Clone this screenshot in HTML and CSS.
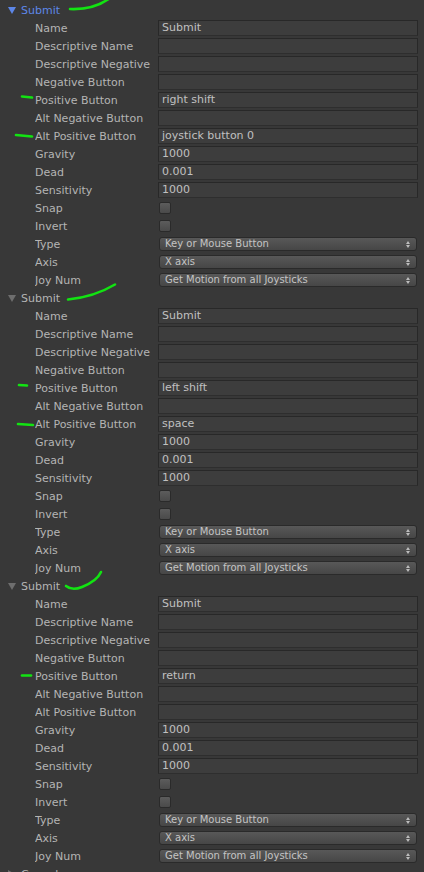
FILE: index.html
```html
<!DOCTYPE html>
<html lang="en">
<head>
    <meta charset="UTF-8">
    <meta name="viewport" content="width=device-width, initial-scale=1.0">
    <title>Input Manager - Axes</title>
    <link rel="stylesheet" href="styles.css">
</head>
<body>
<div class="inspector">
    <!-- axis 1 (selected) -->
    <div class="axis">
        <div class="foldout selected"><span class="arrow"></span>Submit</div>
        <div class="row"><span class="label">Name</span><div class="field">Submit</div></div>
        <div class="row"><span class="label">Descriptive Name</span><div class="field"></div></div>
        <div class="row"><span class="label">Descriptive Negative</span><div class="field"></div></div>
        <div class="row"><span class="label">Negative Button</span><div class="field"></div></div>
        <div class="row"><span class="label">Positive Button</span><div class="field">right shift</div></div>
        <div class="row"><span class="label">Alt Negative Button</span><div class="field"></div></div>
        <div class="row"><span class="label">Alt Positive Button</span><div class="field">joystick button 0</div></div>
        <div class="row"><span class="label">Gravity</span><div class="field">1000</div></div>
        <div class="row"><span class="label">Dead</span><div class="field">0.001</div></div>
        <div class="row"><span class="label">Sensitivity</span><div class="field">1000</div></div>
        <div class="row"><span class="label">Snap</span><span class="check"></span></div>
        <div class="row"><span class="label">Invert</span><span class="check"></span></div>
        <div class="row"><span class="label">Type</span><div class="popup">Key or Mouse Button<span class="updown"></span></div></div>
        <div class="row"><span class="label">Axis</span><div class="popup">X axis<span class="updown"></span></div></div>
        <div class="row"><span class="label">Joy Num</span><div class="popup">Get Motion from all Joysticks<span class="updown"></span></div></div>
    </div>

    <!-- axis 2 -->
    <div class="axis">
        <div class="foldout"><span class="arrow"></span>Submit</div>
        <div class="row"><span class="label">Name</span><div class="field">Submit</div></div>
        <div class="row"><span class="label">Descriptive Name</span><div class="field"></div></div>
        <div class="row"><span class="label">Descriptive Negative</span><div class="field"></div></div>
        <div class="row"><span class="label">Negative Button</span><div class="field"></div></div>
        <div class="row"><span class="label">Positive Button</span><div class="field">left shift</div></div>
        <div class="row"><span class="label">Alt Negative Button</span><div class="field"></div></div>
        <div class="row"><span class="label">Alt Positive Button</span><div class="field">space</div></div>
        <div class="row"><span class="label">Gravity</span><div class="field">1000</div></div>
        <div class="row"><span class="label">Dead</span><div class="field">0.001</div></div>
        <div class="row"><span class="label">Sensitivity</span><div class="field">1000</div></div>
        <div class="row"><span class="label">Snap</span><span class="check"></span></div>
        <div class="row"><span class="label">Invert</span><span class="check"></span></div>
        <div class="row"><span class="label">Type</span><div class="popup">Key or Mouse Button<span class="updown"></span></div></div>
        <div class="row"><span class="label">Axis</span><div class="popup">X axis<span class="updown"></span></div></div>
        <div class="row"><span class="label">Joy Num</span><div class="popup">Get Motion from all Joysticks<span class="updown"></span></div></div>
    </div>

    <!-- axis 3 -->
    <div class="axis">
        <div class="foldout"><span class="arrow"></span>Submit</div>
        <div class="row"><span class="label">Name</span><div class="field">Submit</div></div>
        <div class="row"><span class="label">Descriptive Name</span><div class="field"></div></div>
        <div class="row"><span class="label">Descriptive Negative</span><div class="field"></div></div>
        <div class="row"><span class="label">Negative Button</span><div class="field"></div></div>
        <div class="row"><span class="label">Positive Button</span><div class="field">return</div></div>
        <div class="row"><span class="label">Alt Negative Button</span><div class="field"></div></div>
        <div class="row"><span class="label">Alt Positive Button</span><div class="field"></div></div>
        <div class="row"><span class="label">Gravity</span><div class="field">1000</div></div>
        <div class="row"><span class="label">Dead</span><div class="field">0.001</div></div>
        <div class="row"><span class="label">Sensitivity</span><div class="field">1000</div></div>
        <div class="row"><span class="label">Snap</span><span class="check"></span></div>
        <div class="row"><span class="label">Invert</span><span class="check"></span></div>
        <div class="row"><span class="label">Type</span><div class="popup">Key or Mouse Button<span class="updown"></span></div></div>
        <div class="row"><span class="label">Axis</span><div class="popup">X axis<span class="updown"></span></div></div>
        <div class="row"><span class="label">Joy Num</span><div class="popup">Get Motion from all Joysticks<span class="updown"></span></div></div>
    </div>

    <!-- next axis, folded -->
    <div class="axis">
        <div class="foldout closed"><span class="arrow"></span>Cancel</div>
    </div>

    <!-- green pen marks drawn over the screenshot -->
    <svg class="marks" width="424" height="872" viewBox="0 0 424 872">
        <g fill="none" stroke="#12e312" stroke-width="2.6" stroke-linecap="round">
            <path d="M70 9 Q94 10 110 -2"/>
            <path d="M22 96.5 L32 97.5"/>
            <path d="M16 135 L32 136.5"/>
            <path d="M68 299.5 Q94 297 115 284.5"/>
            <path d="M19 385 L27 385.5"/>
            <path d="M18 424 L33 425"/>
            <path d="M66 586 Q72 591 82 587 Q97 581 101 572"/>
            <path d="M22 675.5 L31 675.5"/>
        </g>
    </svg>
</div>
</body>
</html>
```

FILE: styles.css
```css
*{
    margin: 0;
    padding: 0;
    box-sizing: border-box;
}
html, body{
    height: 100%;
}
body{
    background: #383838;
    font-family: "DejaVu Sans", "Liberation Sans", sans-serif;
    font-size: 11px;
    color: #b4b4b4;
    overflow: hidden;
}
.inspector{
    position: relative;
    padding-top: 1px;
}
.foldout{
    display: flex;
    align-items: center;
    height: 18px;
    padding-left: 8px;
    color: #b4b4b4;
}
.foldout .arrow{
    width: 0;
    height: 0;
    margin-right: 5px;
    border-left: 4px solid transparent;
    border-right: 4px solid transparent;
    border-top: 7px solid #6e6e6e;
}
.foldout.selected{
    color: #5d87e8;
}
.foldout.selected .arrow{
    border-top-color: #5d87e8;
}
.foldout.closed .arrow{
    border-top: 4px solid transparent;
    border-bottom: 4px solid transparent;
    border-left: 7px solid #6e6e6e;
    border-right: 0;
    margin-right: 6px;
}
.row{
    display: flex;
    align-items: center;
    height: 18px;
    padding-left: 35px;
    padding-right: 6px;
}
.row .label{
    width: 123px;
    flex-shrink: 0;
    white-space: nowrap;
    overflow: hidden;
}
.field{
    flex-grow: 1;
    height: 16px;
    line-height: 14px;
    padding-left: 3px;
    background: #3d3d3d;
    border: 1px solid #282828;
    border-bottom-color: #2e2e2e;
    color: #c0c0c0;
}
.check{
    width: 12px;
    height: 12px;
    margin-left: 1px;
    border: 1px solid #2a2a2a;
    border-radius: 2px;
    background: linear-gradient(#5c5c5c, #4a4a4a);
}
.popup{
    position: relative;
    flex-grow: 1;
    height: 14px;
    line-height: 12px;
    margin-left: 1px;
    margin-right: 1px;
    padding-left: 5px;
    font-size: 10px;
    color: #c4c4c4;
    border: 1px solid #2a2a2a;
    border-radius: 3px;
    background: linear-gradient(#585858, #464646);
}
.popup .updown{
    position: absolute;
    right: 6px;
    top: 3px;
    width: 0;
    height: 0;
    border-left: 2px solid transparent;
    border-right: 2px solid transparent;
    border-bottom: 3px solid #bdbdbd;
}
.popup .updown::after{
    content: "";
    position: absolute;
    left: -2px;
    top: 4px;
    border-left: 2px solid transparent;
    border-right: 2px solid transparent;
    border-top: 3px solid #bdbdbd;
}
.marks{
    position: absolute;
    left: 0;
    top: 0;
    pointer-events: none;
}
```
